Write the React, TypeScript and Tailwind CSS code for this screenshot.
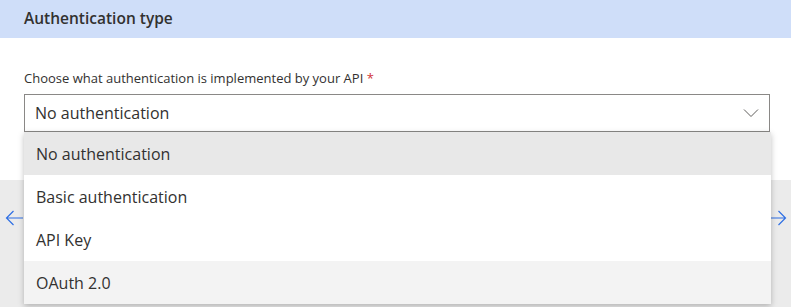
import { useState } from 'react';

const options = ['No authentication', 'Basic authentication', 'API Key', 'OAuth 2.0'];

function Arrow({ dir }: { dir: 'left' | 'right' }) {
  return (
    <svg width="18" height="16" viewBox="0 0 18 16" fill="none" stroke="#2f6fe4" strokeWidth="1.2">
      {dir === 'left' ? (
        <path d="M18 8H1.5M8.5 1 1.5 8l7 7" />
      ) : (
        <path d="M0 8h16.5M9.5 1l7 7-7 7" />
      )}
    </svg>
  );
}

export default function App() {
  const [selected, setSelected] = useState(options[0]);

  return (
    <div className="w-[791px] h-[307px] overflow-hidden bg-white text-[#323130] font-['Open_Sans',sans-serif] flex flex-col">
      <div className="h-[38px] shrink-0 bg-[#cfdef9] flex items-center pl-6 text-[15.5px] font-semibold">
        Authentication type
      </div>

      <div className="h-[142px] shrink-0 pl-6 pr-[21px] pt-[29px]">
        <div className="text-[13px] leading-[22px]">
          Choose what authentication is implemented by your API <span className="text-[#d13438]">*</span>
        </div>
        <div className="relative mt-[5px]">
          <div className="h-[38px] border border-[#8a8886] flex items-center justify-between pl-[10px] pr-[10px] text-[16px]">
            <span>{selected}</span>
            <svg width="16" height="10" viewBox="0 0 16 10" fill="none" stroke="#605e5c" strokeWidth="1">
              <path d="M1 1.5 8 8.5l7-7" />
            </svg>
          </div>

          {/* Open listbox */}
          <div className="absolute left-0 right-[-1px] top-[38px] z-10 bg-white shadow-[0_2px_6px_rgba(0,0,0,0.25)] flex flex-col">
            {options.map((opt, i) => (
              <button
                key={opt}
                onClick={() => setSelected(opt)}
                className={`h-[43px] text-left px-3 text-[16px] ${
                  opt === selected ? 'bg-[#e8e8e8]' : i === 3 ? 'bg-[#f3f3f3]' : 'bg-white'
                }`}
              >
                {opt}
              </button>
            ))}
          </div>
        </div>
      </div>

      <div className="flex-1 bg-[#ebebeb] flex items-start justify-between pt-[30px] pl-[5px] pr-[4px]">
        <Arrow dir="left" />
        <Arrow dir="right" />
      </div>
    </div>
  );
}
